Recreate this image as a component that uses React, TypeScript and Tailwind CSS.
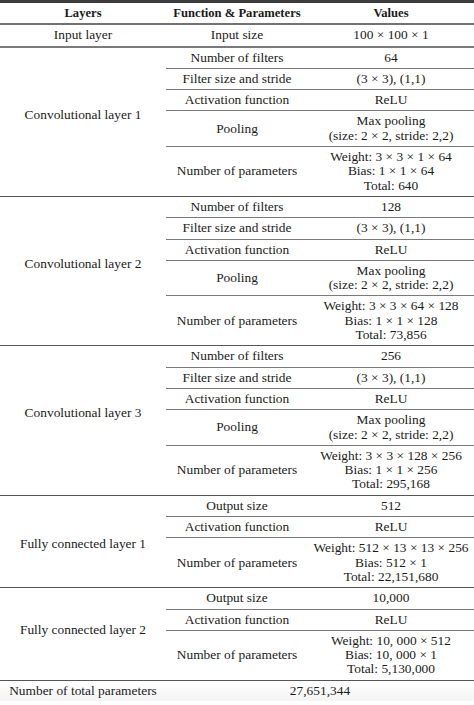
import React from "react";

type Row = { fn: string; values: string[] };
type Group = { layer: string; shift: string; rows: Row[] };

const groups: Group[] = [
  {
    layer: "Convolutional layer 1",
    shift: "pb-[14px]",
    rows: [
      { fn: "Number of filters", values: ["64"] },
      { fn: "Filter size and stride", values: ["(3 × 3), (1,1)"] },
      { fn: "Activation function", values: ["ReLU"] },
      { fn: "Pooling", values: ["Max pooling", "(size: 2 × 2, stride: 2,2)"] },
      {
        fn: "Number of parameters",
        values: ["Weight: 3 × 3 × 1 × 64", "Bias: 1 × 1 × 64", "Total: 640"],
      },
    ],
  },
  {
    layer: "Convolutional layer 2",
    shift: "pb-[14px]",
    rows: [
      { fn: "Number of filters", values: ["128"] },
      { fn: "Filter size and stride", values: ["(3 × 3), (1,1)"] },
      { fn: "Activation function", values: ["ReLU"] },
      { fn: "Pooling", values: ["Max pooling", "(size: 2 × 2, stride: 2,2)"] },
      {
        fn: "Number of parameters",
        values: ["Weight: 3 × 3 × 64 × 128", "Bias: 1 × 1 × 128", "Total: 73,856"],
      },
    ],
  },
  {
    layer: "Convolutional layer 3",
    shift: "pb-[14px]",
    rows: [
      { fn: "Number of filters", values: ["256"] },
      { fn: "Filter size and stride", values: ["(3 × 3), (1,1)"] },
      { fn: "Activation function", values: ["ReLU"] },
      { fn: "Pooling", values: ["Max pooling", "(size: 2 × 2, stride: 2,2)"] },
      {
        fn: "Number of parameters",
        values: ["Weight: 3 × 3 × 128 × 256", "Bias: 1 × 1 × 256", "Total: 295,168"],
      },
    ],
  },
  {
    layer: "Fully connected layer 1",
    shift: "pt-[6px]",
    rows: [
      { fn: "Output size", values: ["512"] },
      { fn: "Activation function", values: ["ReLU"] },
      {
        fn: "Number of parameters",
        values: ["Weight: 512 × 13 × 13 × 256", "Bias: 512 × 1", "Total: 22,151,680"],
      },
    ],
  },
  {
    layer: "Fully connected layer 2",
    shift: "pb-[8px]",
    rows: [
      { fn: "Output size", values: ["10,000"] },
      { fn: "Activation function", values: ["ReLU"] },
      {
        fn: "Number of parameters",
        values: ["Weight: 10, 000 × 512", "Bias: 10, 000 × 1", "Total: 5,130,000"],
      },
    ],
  },
];

export default function App() {
  return (
    <div className="w-[474px] h-[705px] overflow-hidden bg-white font-['Liberation_Serif',serif] text-[13.4px] leading-[14.3px] text-[#1a1a1a]">
      <div className="border-t-[3px] border-[#3d3d3d]">
        {/* header */}
        <div className="flex border-b-2 border-[#727272] font-bold text-[12.6px]">
          <div className="w-[166px] py-[3px] text-center">Layers</div>
          <div className="w-[142px] py-[3px] text-center">Function &amp; Parameters</div>
          <div className="flex-1 py-[3px] text-center">Values</div>
        </div>

        <div className="flex border-b-2 border-[#7a7a7a]">
          <div className="w-[166px] py-[3px] text-center">Input layer</div>
          <div className="w-[142px] py-[3px] text-center">Input size</div>
          <div className="flex-1 py-[3px] text-center">100 × 100 × 1</div>
        </div>

        {groups.map((g) => (
          <div key={g.layer} className="flex border-b border-[#555]">
            <div
              className={`w-[166px] flex items-center justify-center text-center ${g.shift}`}
            >
              {g.layer}
            </div>
            <div className="flex-1 flex flex-col">
              {g.rows.map((r, i) => (
                <div
                  key={r.fn}
                  className={
                    i < g.rows.length - 1 ? "flex border-b border-[#7a7a7a]" : "flex"
                  }
                >
                  <div className="w-[142px] py-[3px] flex items-center justify-center text-center">
                    {r.fn}
                  </div>
                  <div className="flex-1 py-[3px] flex flex-col items-center justify-center text-center">
                    {r.values.map((v) => (
                      <div key={v}>{v}</div>
                    ))}
                  </div>
                </div>
              ))}
            </div>
          </div>
        ))}

        <div className="flex bg-gradient-to-b from-white to-[#f4f4f4]">
          <div className="w-[166px] py-[3px] text-center">Number of total parameters</div>
          <div className="flex-1 py-[3px] text-center">27,651,344</div>
        </div>
      </div>
    </div>
  );
}
